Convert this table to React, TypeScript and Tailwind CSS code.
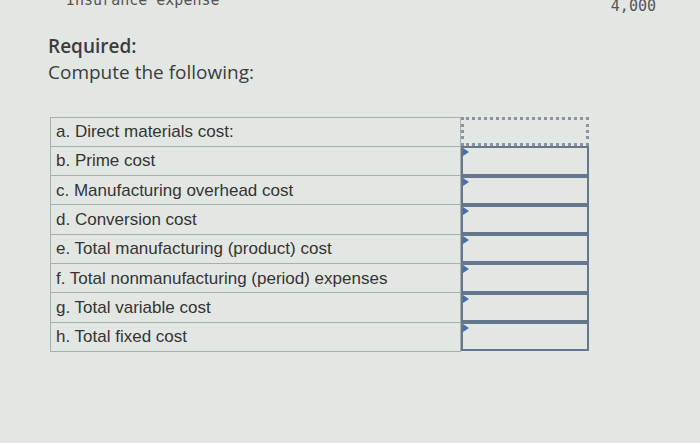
import React from "react";

const rows = [
    "a. Direct materials cost:",
    "b. Prime cost",
    "c. Manufacturing overhead cost",
    "d. Conversion cost",
    "e. Total manufacturing (product) cost",
    "f. Total nonmanufacturing (period) expenses",
    "g. Total variable cost",
    "h. Total fixed cost",
];

const AnswerCell = ({ first }: { first: boolean }) => {
    if (first) {
        return (
            <div className="h-full w-full border-[3px] border-dotted border-[#8a93a0]" />
        );
    }
    return (
        <div className="relative h-full w-full border-2 border-[#64778f]">
            <span className="absolute left-0 top-0 h-0 w-0 border-y-[4px] border-l-[6px] border-y-transparent border-l-[#4670a8]" />
        </div>
    );
};

const App = () => {
    return (
        <div className="relative h-[443px] w-[700px] overflow-hidden bg-[#e3e7e3] font-['Open_Sans',sans-serif] text-[#3b3d3d]">
            <div className="-mt-[11px] flex items-start justify-between font-['DejaVu_Sans_Mono',monospace] text-[15px] text-[#555]">
                <span className="pl-[66px]">Insurance expense</span>
                <span className="pr-[44px] pt-[6px]">4,000</span>
            </div>

            <div className="mt-[15px] pl-[48px]">
                <h3 className="text-[19px] font-semibold leading-[26px]">Required:</h3>
                <p className="text-[19px] leading-[26px]">Compute the following:</p>
            </div>

            <table className="ml-[50px] mt-[32px] border-collapse font-['Liberation_Sans',Arial,sans-serif] text-[17px] text-[#343434]">
                <tbody>
                    {rows.map((label, i) => (
                        <tr key={label} className="h-[29.3px]">
                            <td className="w-[410px] border border-[#a9afab] pl-[5px] leading-none">
                                {label}
                            </td>
                            <td className="h-[29.3px] w-[128px] p-0">
                                <AnswerCell first={i === 0} />
                            </td>
                        </tr>
                    ))}
                </tbody>
            </table>
        </div>
    );
};

export default App;
